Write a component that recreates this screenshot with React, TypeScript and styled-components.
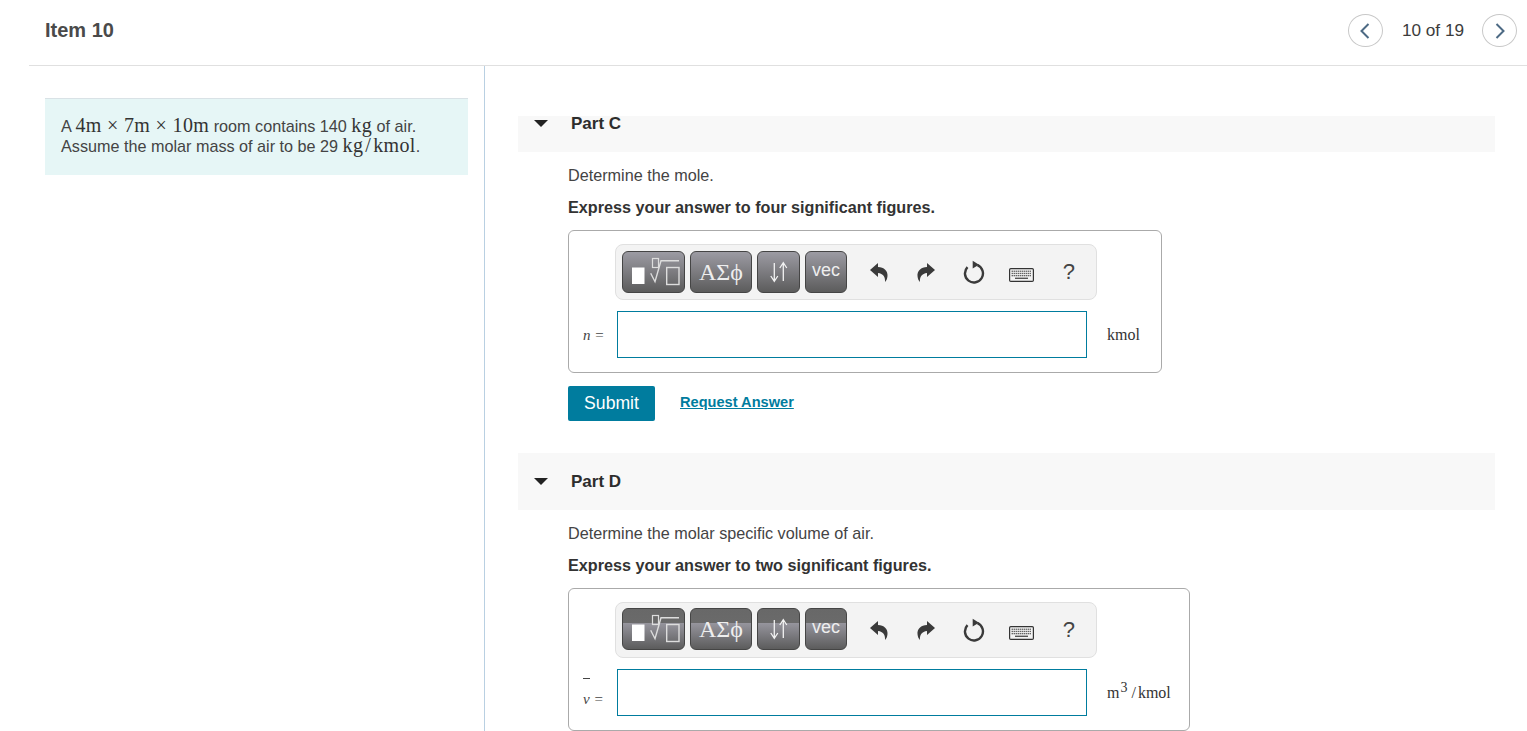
import React from 'react';
import styled, { createGlobalStyle } from 'styled-components';

const GlobalStyle = createGlobalStyle`
  html, body {
    margin: 0;
    padding: 0;
    background: #fff;
    overflow: hidden;
  }
  body {
    font-family: "Liberation Sans", Arial, sans-serif;
    font-size: 16.2px;
    color: #333;
  }
`;

const Page = styled.div`
  width: 1527px;
  height: 731px;
  overflow: hidden;
`;

const Header = styled.header`
  box-sizing: border-box;
  height: 66px;
  margin-left: 29px;
  padding: 0 10px 4px 16px;
  border-bottom: 1px solid #e0e0e0;
  display: flex;
  align-items: center;
  justify-content: space-between;
`;

const Title = styled.h1`
  margin: 0;
  font-size: 20px;
  font-weight: 700;
  color: #4a4a4a;
`;

const Pager = styled.nav`
  display: flex;
  align-items: center;
  gap: 18px;
  font-size: 17.2px;
  color: #3c3c3c;
`;

const PagerButton = styled.button<{ $prev?: boolean }>`
  box-sizing: border-box;
  width: 35px;
  height: 33px;
  margin-right: ${(p) => (p.$prev ? '1px' : '0')};
  padding: 0;
  border: 1px solid #c8c8c8;
  border-radius: 50%;
  background: #fff;
  display: flex;
  align-items: center;
  justify-content: center;
`;

const Body = styled.div`
  display: flex;
  margin-left: 29px;
`;

const LeftPane = styled.aside`
  box-sizing: border-box;
  width: 456px;
  height: 665px;
  padding: 32px 16px 0;
  border-right: 1px solid #b9d0e2;
`;

const Note = styled.div`
  box-sizing: border-box;
  width: 423px;
  height: 77px;
  padding: 17px 16px 0;
  background: #e6f6f6;
  border-top: 1px solid #d9e2e6;
  line-height: 20px;
  color: #444;
`;

const MathText = styled.span`
  font-family: "Liberation Serif", "Times New Roman", serif;
  font-size: 20px;
  line-height: 0;
  letter-spacing: 0.35px;
  color: #333;
`;

const RightPane = styled.main`
  box-sizing: border-box;
  width: 1010px;
  padding: 50px 0 0 33px;
`;

const PartHeader = styled.div<{ $clipped?: boolean }>`
  box-sizing: border-box;
  height: ${(p) => (p.$clipped ? '36px' : '57px')};
  padding-left: 16px;
  background: #f8f8f8;
  display: flex;
  align-items: ${(p) => (p.$clipped ? 'flex-start' : 'center')};
  gap: 22px;
  font-size: 17px;
  font-weight: 700;
  color: #2d2d2d;
  line-height: 16px;
`;

const Caret = styled.span<{ $clipped?: boolean }>`
  width: 0;
  height: 0;
  margin-top: ${(p) => (p.$clipped ? '4px' : '-1px')};
  border-left: 7.5px solid transparent;
  border-right: 7.5px solid transparent;
  border-top: 7px solid #222;
`;

const PartName = styled.span`
  margin-left: 1px;
`;

const PartBody = styled.section`
  padding: 13px 0 32px 50px;
`;

const Prompt = styled.p`
  margin: 0 0 12px;
  line-height: 20px;
  color: #444;
`;

const Instruction = styled.p`
  margin: 0 0 13px;
  line-height: 20px;
  font-weight: 700;
  color: #333;
`;

const AnswerBox = styled.div<{ $width: number }>`
  box-sizing: border-box;
  width: ${(p) => p.$width}px;
  height: 143px;
  padding-top: 13px;
  border: 1px solid #aaa;
  border-radius: 6px;
`;

const Toolbar = styled.div`
  box-sizing: border-box;
  width: 482px;
  height: 56px;
  margin-left: 46px;
  padding: 6px;
  background: #f3f3f3;
  border: 1px solid #e0e0e0;
  border-radius: 8px;
  display: flex;
  align-items: flex-start;
  gap: 5px;
`;

const ToolButton = styled.button<{ $width: number; $banded?: boolean }>`
  box-sizing: border-box;
  flex: none;
  width: ${(p) => p.$width}px;
  height: 42px;
  margin-top: ${(p) => (p.$banded ? '-1px' : '0')};
  padding: 0;
  border: 1px solid #454545;
  border-radius: 6px;
  background: ${(p) =>
    p.$banded
      ? 'linear-gradient(#686868 0, #6a6a6a 14px, #96959d 14px, #5c5c5c 100%)'
      : 'linear-gradient(#9c9ba3, #5c5c5c)'};
  color: #eee;
  display: flex;
  align-items: center;
  justify-content: center;
`;

const GreekLabel = styled.span`
  font-family: "Liberation Serif", "Times New Roman", serif;
  font-size: 24px;
`;

const VecLabel = styled.span`
  font-family: "Liberation Sans", Arial, sans-serif;
  font-size: 18px;
  margin-top: -3px;
`;

const IconRow = styled.div`
  flex: none;
  margin-left: 3px;
  display: flex;
  align-items: center;
`;

const IconSlot = styled.span`
  width: 47.5px;
  height: 42px;
  display: flex;
  align-items: center;
  justify-content: center;
  color: #3a3a3a;
`;

const HelpMark = styled.span`
  font-size: 22px;
  color: #444;
`;

const InputRow = styled.div`
  margin-top: 11px;
  display: flex;
  align-items: center;
`;

const VarLabel = styled.label`
  box-sizing: border-box;
  width: 48px;
  padding: 2px 0 0 14px;
  font-family: "Liberation Serif", "Times New Roman", serif;
  font-size: 15px;
  word-spacing: 1px;
  color: #444;
  white-space: nowrap;
`;

const VarName = styled.i`
  font-style: italic;
`;

const BarredVar = styled.span`
  display: flex;
  flex-direction: column;
  align-items: flex-start;
  padding-bottom: 3px;
  line-height: 16px;
`;

const Bar = styled.span`
  width: 7px;
  height: 1px;
  margin-bottom: 12px;
  background: #444;
`;

const AnswerInput = styled.input`
  box-sizing: border-box;
  width: 470px;
  height: 47px;
  border: 1px solid #007c9e;
  outline: none;
  background: #fff;
`;

const Unit = styled.span`
  margin: 1px 0 0 20px;
  font-family: "Liberation Serif", "Times New Roman", serif;
  font-size: 16px;
  color: #333;
`;

const Sup = styled.sup`
  margin: 0 2px 0 1px;
  font-size: 14px;
  line-height: 0;
`;

const Slash = styled.span`
  margin: 0 2px;
`;

const Actions = styled.div`
  margin-top: 13px;
  display: flex;
  align-items: center;
  gap: 25px;
`;

const SubmitButton = styled.button`
  width: 87px;
  height: 35px;
  padding: 0;
  border: none;
  border-radius: 2px;
  background: #007c9e;
  color: #fff;
  font-family: "Liberation Sans", Arial, sans-serif;
  font-size: 17.6px;
`;

const RequestLink = styled.a`
  margin-top: -4px;
  font-size: 14.6px;
  font-weight: 700;
  color: #007c9e;
  text-decoration: underline;
`;

const KeyboardSlot = styled.span`
  margin-top: 6px;
  display: flex;
`;

const Chevron = ({ flip }: { flip?: boolean }) => (
  <svg width="12" height="18" viewBox="0 0 12 18" style={flip ? { transform: 'scaleX(-1)' } : undefined}>
    <path d="M9.5 2 L2.5 9 L9.5 16" fill="none" stroke="#4d6a84" strokeWidth="2" />
  </svg>
);

const ReplyIcon = ({ flip }: { flip?: boolean }) => (
  <svg width="18" height="20" viewBox="0 0 18 20" style={flip ? { transform: 'scaleX(-1)' } : undefined}>
    <path d="M0 8 L8 1 V5 C14 5 18 9 17.5 14 C17.3 16.5 16.5 18.5 15 20 C15.5 15 13 11.5 8 11 V15 Z" fill="currentColor" />
  </svg>
);

const ResetIcon = () => (
  <svg width="22" height="24" viewBox="0 0 22 24">
    <path d="M14.5 5.2 A9 9 0 1 1 4.5 7.2" fill="none" stroke="currentColor" strokeWidth="2.4" />
    <path d="M9.7 0.7 L16 4.7 L9.7 8.5 Z" fill="currentColor" />
  </svg>
);

const KeyboardIcon = () => {
  const keys: React.ReactElement[] = [];
  for (let r = 0; r < 3; r++) {
    for (let c = 0; c < 10; c++) {
      keys.push(<rect key={`${r}-${c}`} x={2.6 + c * 2} y={2.6 + r * 2.2} width="1.3" height="1.3" fill="#555" />);
    }
  }
  return (
    <svg width="25" height="14" viewBox="0 0 25 14">
      <rect x="0.6" y="0.6" width="23.8" height="12.8" rx="1.2" fill="#f3f3f3" stroke="#333" strokeWidth="1.2" />
      {keys}
      <rect x="6" y="9.6" width="13" height="1.4" fill="#555" />
    </svg>
  );
};

const FractionRootIcon = () => (
  <svg width="61" height="40" viewBox="1 1 61 40">
    <rect x="10" y="16.5" width="12.5" height="16.5" fill="#fff" />
    <rect x="30.5" y="7.5" width="6" height="9" fill="none" stroke="#ddd" strokeWidth="1.2" />
    <path d="M28.7 22.3 L33 30.7 L39 9.7 H57" fill="none" stroke="#ddd" strokeWidth="1.4" />
    <rect x="44.7" y="16.5" width="12.3" height="17" fill="none" stroke="#ddd" strokeWidth="1.4" />
  </svg>
);

const ArrowsIcon = () => (
  <svg width="41" height="40" viewBox="1 1 41 40">
    <path d="M17.3 12 V30 M13.8 25 L17.3 30.3 L20.8 25" fill="none" stroke="#f2f2f2" strokeWidth="1.3" />
    <path d="M26.3 30 V12 M22.8 17 L26.3 11.7 L29.8 17" fill="none" stroke="#f2f2f2" strokeWidth="1.3" />
  </svg>
);

const MathToolbar = ({ banded }: { banded?: boolean }) => (
  <Toolbar>
    <ToolButton $width={63} $banded={banded}><FractionRootIcon /></ToolButton>
    <ToolButton $width={62} $banded={banded}><GreekLabel>ΑΣϕ</GreekLabel></ToolButton>
    <ToolButton $width={43} $banded={banded}><ArrowsIcon /></ToolButton>
    <ToolButton $width={42} $banded={banded}><VecLabel>vec</VecLabel></ToolButton>
    <IconRow>
      <IconSlot><ReplyIcon /></IconSlot>
      <IconSlot><ReplyIcon flip /></IconSlot>
      <IconSlot><ResetIcon /></IconSlot>
      <IconSlot><KeyboardSlot><KeyboardIcon /></KeyboardSlot></IconSlot>
      <IconSlot><HelpMark>?</HelpMark></IconSlot>
    </IconRow>
  </Toolbar>
);

export default function App() {
  return (
    <Page>
      <GlobalStyle />
      <Header>
        <Title>Item 10</Title>
        <Pager>
          <PagerButton $prev><Chevron /></PagerButton>
          <span>10 of 19</span>
          <PagerButton><Chevron flip /></PagerButton>
        </Pager>
      </Header>
      <Body>
        <LeftPane>
          <Note>
            A <MathText>4m × 7m × 10m</MathText> room contains 140 <MathText>kg</MathText> of air.
            <br />
            Assume the molar mass of air to be 29 <MathText>kg<Slash>/</Slash>kmol</MathText>.
          </Note>
        </LeftPane>
        <RightPane>
          <PartHeader $clipped>
            <Caret $clipped />
            <PartName>Part C</PartName>
          </PartHeader>
          <PartBody>
            <Prompt>Determine the mole.</Prompt>
            <Instruction>Express your answer to four significant figures.</Instruction>
            <AnswerBox $width={594}>
              <MathToolbar />
              <InputRow>
                <VarLabel><VarName>n</VarName> =</VarLabel>
                <AnswerInput />
                <Unit>kmol</Unit>
              </InputRow>
            </AnswerBox>
            <Actions>
              <SubmitButton>Submit</SubmitButton>
              <RequestLink>Request Answer</RequestLink>
            </Actions>
          </PartBody>
          <PartHeader>
            <Caret />
            <PartName>Part D</PartName>
          </PartHeader>
          <PartBody>
            <Prompt>Determine the molar specific volume of air.</Prompt>
            <Instruction>Express your answer to two significant figures.</Instruction>
            <AnswerBox $width={622}>
              <MathToolbar banded />
              <InputRow>
                <VarLabel>
                  <BarredVar>
                    <Bar />
                    <span><VarName>v</VarName> =</span>
                  </BarredVar>
                </VarLabel>
                <AnswerInput />
                <Unit>m<Sup>3</Sup><Slash>/</Slash>kmol</Unit>
              </InputRow>
            </AnswerBox>
          </PartBody>
        </RightPane>
      </Body>
    </Page>
  );
}
